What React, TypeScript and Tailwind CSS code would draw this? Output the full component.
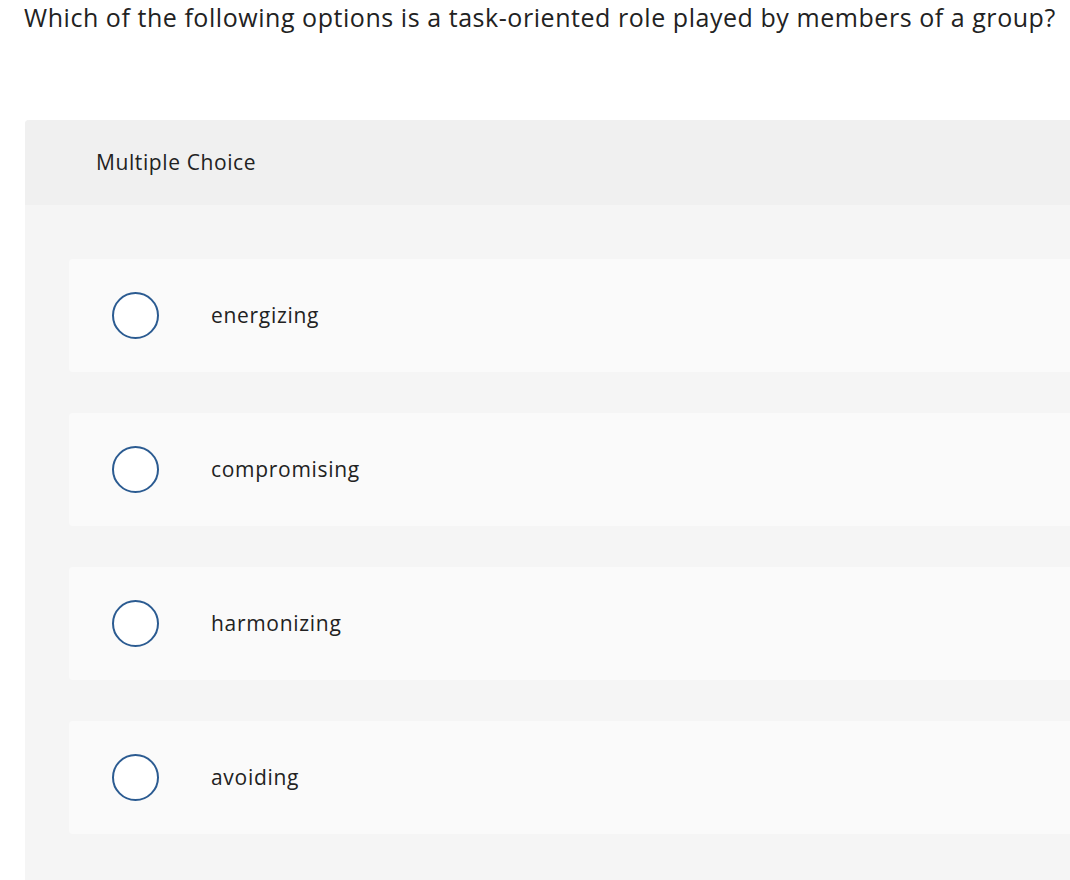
import React from "react";

const options = ["energizing", "compromising", "harmonizing", "avoiding"];

function Radio(): JSX.Element {
  return (
    <span className="block h-[47px] w-[47px] shrink-0 rounded-full border-2 border-[#2b5b91] bg-white" />
  );
}

export default function App(): JSX.Element {
  return (
    <div
      className="h-[880px] w-[1070px] overflow-hidden bg-white text-[#222222]"
      style={{ fontFamily: "'Open Sans', Lato, sans-serif" }}
    >
      <h1 className="pl-[24px] pt-[0px] text-[25px] leading-[34px] tracking-[0.55px] whitespace-nowrap">
        Which of the following options is a task-oriented role played by members of a group?
      </h1>

      <section className="ml-[25px] mt-[86px] w-[1080px] rounded-tl-[4px] bg-[#f5f5f5]">
        <header className="flex h-[85px] items-center rounded-tl-[4px] bg-[#f0f0f0] pl-[71px] text-[21px] tracking-[0.6px]">
          Multiple Choice
        </header>
        <ul className="flex flex-col gap-[41px] pb-[60px] pl-[44px] pt-[54px]">
          {options.map((opt) => (
            <li
              key={opt}
              className="flex h-[113px] items-center rounded-l-[4px] bg-[#fafafa] pl-[43px]"
            >
              <Radio />
              <span className="ml-[52px] text-[21px] tracking-[0.7px]">{opt}</span>
            </li>
          ))}
        </ul>
      </section>
    </div>
  );
}
